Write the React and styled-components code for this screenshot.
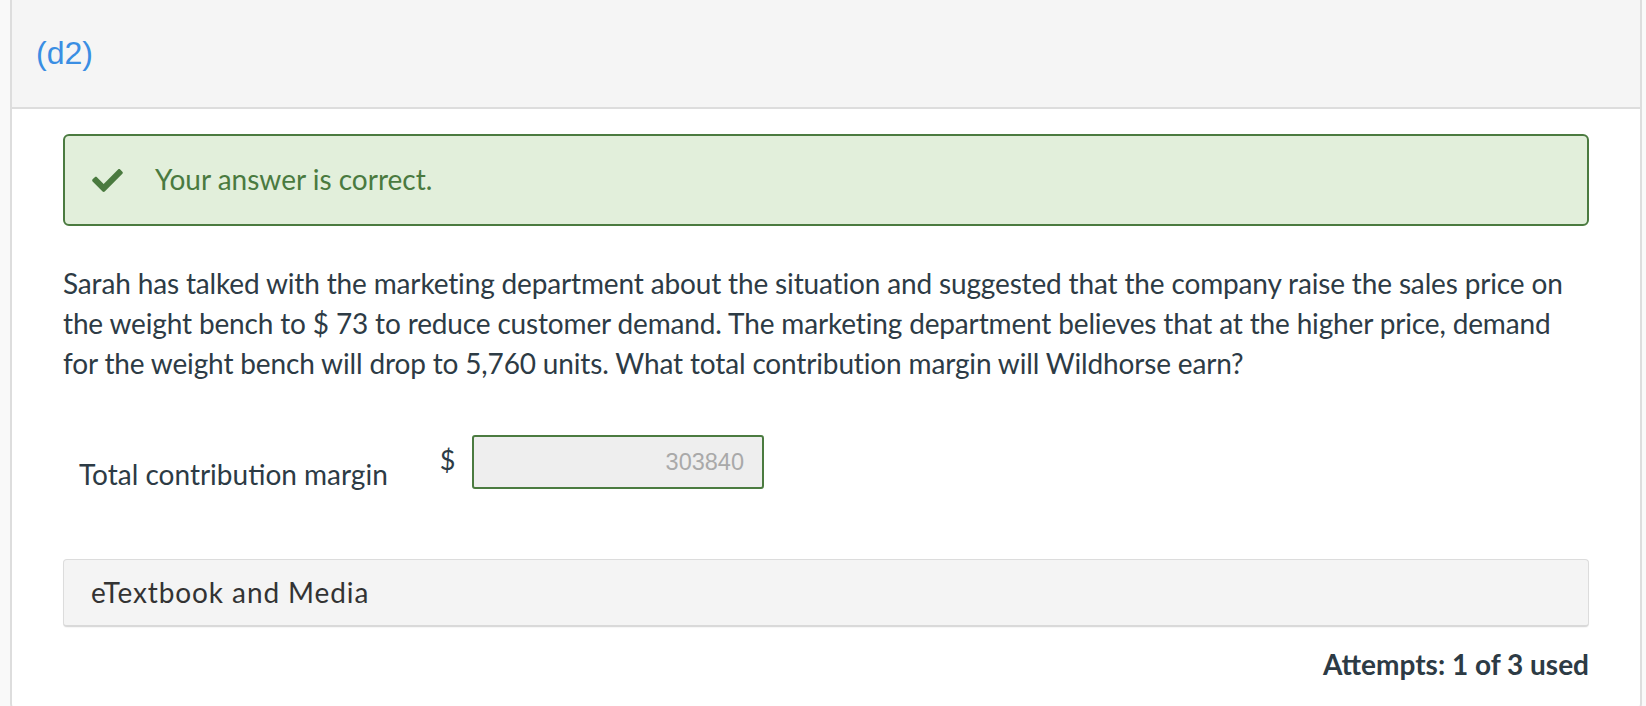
import React from "react";
import styled, { createGlobalStyle } from "styled-components";

const Global = createGlobalStyle`
  html, body { margin: 0; padding: 0; }
  body {
    background: #f9f9f9;
    font-family: Lato, "Open Sans", sans-serif;
    color: #2d3b45;
  }
`;

const Panel = styled.section`
  margin-left: 10px;
  width: 1628px;
  border: 2px solid #dddddd;
  border-top: none;
  border-radius: 0 0 7px 7px;
  background: #ffffff;
  overflow: hidden;
`;

const Header = styled.header`
  height: 107px;
  background: #f5f5f5;
  border-bottom: 2px solid #dddddd;
  display: flex;
  align-items: center;
  padding-left: 24px;
`;

const PartLabel = styled.h2`
  margin: 0;
  font-family: "Liberation Sans", Arial, sans-serif;
  font-weight: 400;
  font-size: 32px;
  color: #3a8ee3;
`;

const Body = styled.div`
  padding: 25px 51px 25px 51px;
  display: flex;
  flex-direction: column;
`;

const Feedback = styled.div`
  height: 88px;
  border: 2px solid #4b7b40;
  border-radius: 6px;
  background: #e2efdb;
  display: flex;
  align-items: center;
  padding-left: 27px;
  gap: 32px;
  color: #4a7a3f;
  font-size: 28px;
  line-height: 37.5px;
`;

const Question = styled.p`
  margin: 37px 0 0 0;
  font-size: 28px;
  letter-spacing: -0.15px;
  line-height: 40px;
  color: #2d3b45;
`;

const AnswerRow = styled.div`
  display: flex;
  align-items: flex-start;
  margin-top: 52px;
  padding-left: 16px;
`;

const FieldLabel = styled.label`
  width: 356px;
  margin-top: 21px;
  font-size: 28px;
  line-height: 37.5px;
  color: #2d3b45;
`;

const Unit = styled.span`
  width: 25px;
  margin-top: 6px;
  margin-right: 12px;
  text-align: center;
  font-size: 27px;
  line-height: 37.5px;
  color: #2d3b45;
`;

const AnswerInput = styled.input`
  box-sizing: border-box;
  width: 292px;
  height: 54px;
  border: 2px solid #4b7b40;
  border-radius: 3px;
  background: #eeeeee;
  padding: 0 18px 0 8px;
  text-align: right;
  font-family: "Liberation Sans", Arial, sans-serif;
  font-size: 23.5px;
  color: #a9a9a9;
  outline: none;
`;

const Resources = styled.div`
  margin-top: 65px;
  border: 1px solid #dcdcdc;
  border-bottom: 2px solid #d9d9d9;
  border-radius: 4px;
  background: #f4f4f4;
  padding: 14px 26px 14px 27px;
  font-size: 28px;
  letter-spacing: 0.9px;
  line-height: 37.5px;
  color: #333333;
  box-shadow: 0 1px 1px rgba(0, 0, 0, 0.04);
`;

const Attempts = styled.div`
  margin-top: 19px;
  text-align: right;
  font-size: 28px;
  line-height: 37.5px;
  font-weight: 700;
  color: #2d3b45;
`;

const CheckIcon = () => (
  <svg width="31" height="23" viewBox="0 64 512 384" aria-hidden="true">
    <path
      fill="#4a7a3f"
      d="M173.898 439.404l-166.4-166.4c-9.997-9.997-9.997-26.206 0-36.204l36.203-36.204c9.997-9.998 26.207-9.998 36.204 0L192 312.69 432.095 72.596c9.997-9.997 26.207-9.997 36.204 0l36.203 36.204c9.997 9.997 9.997 26.206 0 36.204l-294.4 294.401c-9.998 9.997-26.207 9.997-36.204-.001z"
    />
  </svg>
);

export default function App() {
  return (
    <>
      <Global />
      <Panel>
        <Header>
          <PartLabel>(d2)</PartLabel>
        </Header>
        <Body>
          <Feedback>
            <CheckIcon />
            <span>Your answer is correct.</span>
          </Feedback>
          <Question>
            Sarah has talked with the marketing department about the situation and
            suggested that the company raise the sales price on the weight bench to $ 73
            to reduce customer demand. The marketing department believes that at the
            higher price, demand for the weight bench will drop to 5,760 units. What
            total contribution margin will Wildhorse earn?
          </Question>
          <AnswerRow>
            <FieldLabel htmlFor="tcm">Total contribution margin</FieldLabel>
            <Unit>$</Unit>
            <AnswerInput id="tcm" value="303840" readOnly />
          </AnswerRow>
          <Resources>eTextbook and Media</Resources>
          <Attempts>Attempts: 1 of 3 used</Attempts>
        </Body>
      </Panel>
    </>
  );
}
